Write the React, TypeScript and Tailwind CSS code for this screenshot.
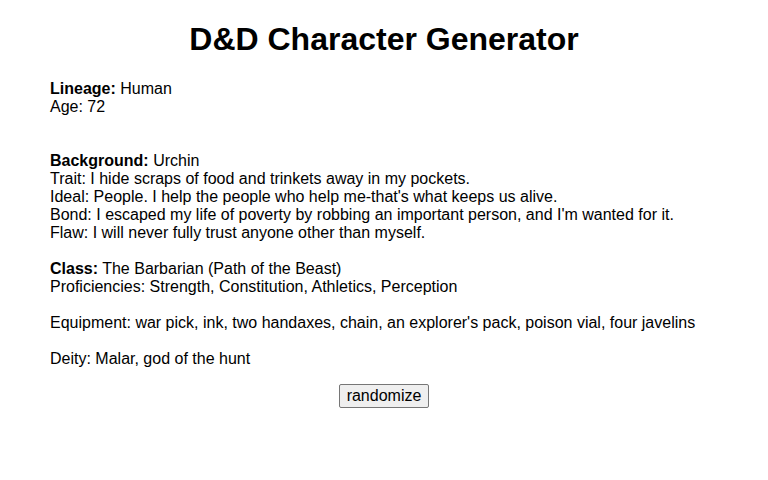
import { useState } from 'react'

interface Character {
  lineage: string
  age: number
  background: string
  trait: string
  ideal: string
  bond: string
  flaw: string
  className: string
  proficiencies: string[]
  equipment: string[]
  deity: string
}

const character: Character = {
  lineage: 'Human',
  age: 72,
  background: 'Urchin',
  trait: 'I hide scraps of food and trinkets away in my pockets.',
  ideal: "People. I help the people who help me-that's what keeps us alive.",
  bond: "I escaped my life of poverty by robbing an important person, and I'm wanted for it.",
  flaw: 'I will never fully trust anyone other than myself.',
  className: 'The Barbarian (Path of the Beast)',
  proficiencies: ['Strength', 'Constitution', 'Athletics', 'Perception'],
  equipment: ['war pick', 'ink', 'two handaxes', 'chain', "an explorer's pack", 'poison vial', 'four javelins'],
  deity: 'Malar, god of the hunt'
}

export default function App() {
  const [char, setChar] = useState<Character>(character)

  return (
    <div className="min-h-[480px] w-full bg-white text-black font-['Liberation_Sans',Arial,sans-serif] text-[16px] leading-[18px] px-[50px]">
      <h1 className="text-[32px] leading-[37px] font-bold text-center pt-[21px] mb-[22px]">
        D&amp;D Character Generator
      </h1>

      <div>
        <div><span className="font-bold">Lineage:</span> {char.lineage}</div>
        <div>Age: {char.age}</div>
      </div>

      <div className="mt-[36px]">
        <div><span className="font-bold">Background:</span> {char.background}</div>
        <div>Trait: {char.trait}</div>
        <div>Ideal: {char.ideal}</div>
        <div>Bond: {char.bond}</div>
        <div>Flaw: {char.flaw}</div>
      </div>

      <div className="mt-[18px]">
        <div><span className="font-bold">Class:</span> {char.className}</div>
        <div>Proficiencies: {char.proficiencies.join(', ')}</div>
      </div>

      <div className="mt-[18px]">Equipment: {char.equipment.join(', ')}</div>

      <div className="mt-[18px]">Deity: {char.deity}</div>

      <div className="flex justify-center mt-[16px]">
        <button
          onClick={() => setChar({ ...char })}
          className="bg-[#efefef] border border-[#767676] rounded-[2px] px-[7px] py-[2px] leading-[18px] text-[16px] text-black"
        >
          randomize
        </button>
      </div>
    </div>
  )
}
